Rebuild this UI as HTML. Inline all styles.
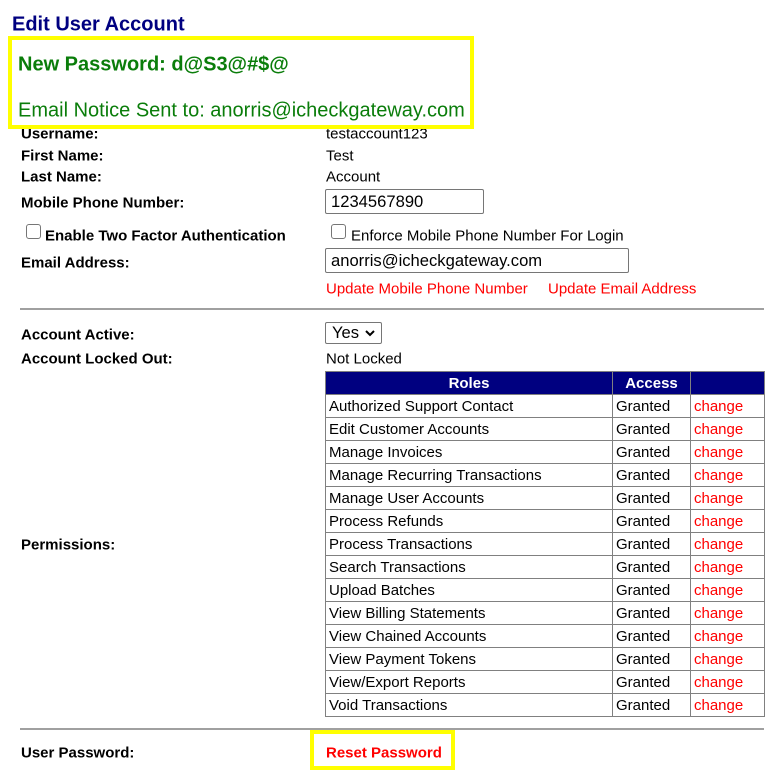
<!DOCTYPE html>
<html><head><meta charset="utf-8"><style>
*{margin:0;padding:0;box-sizing:border-box}
body{width:777px;height:780px;background:#fff;font-family:"Liberation Sans",Arial,sans-serif;font-size:15px;color:#000;position:relative;overflow:hidden}
.a{position:absolute;white-space:nowrap;line-height:20px;transform:translateY(1.5px)}
.b{font-weight:bold}
.r{color:#ff0000}
.inp{position:absolute;border:1px solid #767676;border-radius:2px;background:#fff;font-size:16.6px;line-height:23px;padding-left:5px}
.cb{position:absolute;width:15px;height:15px;border:1px solid #767676;border-radius:3px;background:#fff}
.hr{position:absolute;height:2px;background:#a0a0a0}
table{position:absolute;left:325px;top:371px;border-collapse:collapse;width:440px}
td,th{border:1px solid #808080;height:23px;font-size:15px;padding:2px 3px 0;line-height:20px;white-space:nowrap}
th{background:#000080;color:#fff;font-weight:bold;text-align:center}
td.c{color:#ff0000;padding-left:3px}
</style></head><body>
<div class="a b" style="left:12px;top:11px;font-size:20px;line-height:24px;color:#000080">Edit User Account</div>
<div style="position:absolute;left:8px;top:36px;width:466px;height:93px;border:4px solid #ffff00"></div>
<div class="a b" style="left:18px;top:51px;font-size:20px;line-height:24px;color:#0a7d0a">New Password: d@S3@#$@</div>
<div class="a" style="left:18px;top:97px;font-size:20px;line-height:24px;color:#0a7d0a">Email Notice Sent to: anorris@icheckgateway.com</div>

<div class="a b" style="left:21px;top:123px;z-index:-1">Username:</div>
<div class="a" style="left:326px;top:123px;z-index:-1">testaccount123</div>
<div class="a b" style="left:21px;top:145px">First Name:</div>
<div class="a" style="left:326px;top:145px">Test</div>
<div class="a b" style="left:21px;top:166px">Last Name:</div>
<div class="a" style="left:326px;top:166px">Account</div>
<div class="a b" style="left:21px;top:192px">Mobile Phone Number:</div>
<div class="inp" style="left:325px;top:189px;width:159px;height:25px">1234567890</div>
<div class="cb" style="left:26px;top:224px"></div>
<div class="a b" style="left:45px;top:225px">Enable Two Factor Authentication</div>
<div class="cb" style="left:331px;top:224px"></div>
<div class="a" style="left:351px;top:225px">Enforce Mobile Phone Number For Login</div>
<div class="a b" style="left:21px;top:252px">Email Address:</div>
<div class="inp" style="left:325px;top:248px;width:304px;height:25px">anorris@icheckgateway.com</div>
<div class="a r" style="left:326px;top:278px">Update Mobile Phone Number</div>
<div class="a r" style="left:548px;top:278px">Update Email Address</div>
<div class="hr" style="left:20px;top:308px;width:744px"></div>

<div class="a b" style="left:21px;top:324px">Account Active:</div>
<div class="inp" style="left:325px;top:322px;width:57px;height:22px;font-size:16.6px;line-height:20px;padding-left:6px">Yes<svg style="position:absolute;left:39px;top:7px" width="10" height="7" viewBox="0 0 10 7"><path d="M1 1l4 4 4-4" fill="none" stroke="#000" stroke-width="2"/></svg></div>
<div class="a b" style="left:21px;top:348px">Account Locked Out:</div>
<div class="a" style="left:326px;top:348px">Not Locked</div>
<div class="a b" style="left:21px;top:534px">Permissions:</div>

<table>
<tr><th style="width:287px">Roles</th><th style="width:78px">Access</th><th></th></tr>
<tr><td>Authorized Support Contact</td><td>Granted</td><td class="c">change</td></tr>
<tr><td>Edit Customer Accounts</td><td>Granted</td><td class="c">change</td></tr>
<tr><td>Manage Invoices</td><td>Granted</td><td class="c">change</td></tr>
<tr><td>Manage Recurring Transactions</td><td>Granted</td><td class="c">change</td></tr>
<tr><td>Manage User Accounts</td><td>Granted</td><td class="c">change</td></tr>
<tr><td>Process Refunds</td><td>Granted</td><td class="c">change</td></tr>
<tr><td>Process Transactions</td><td>Granted</td><td class="c">change</td></tr>
<tr><td>Search Transactions</td><td>Granted</td><td class="c">change</td></tr>
<tr><td>Upload Batches</td><td>Granted</td><td class="c">change</td></tr>
<tr><td>View Billing Statements</td><td>Granted</td><td class="c">change</td></tr>
<tr><td>View Chained Accounts</td><td>Granted</td><td class="c">change</td></tr>
<tr><td>View Payment Tokens</td><td>Granted</td><td class="c">change</td></tr>
<tr><td>View/Export Reports</td><td>Granted</td><td class="c">change</td></tr>
<tr><td>Void Transactions</td><td>Granted</td><td class="c">change</td></tr>
</table>

<div class="hr" style="left:20px;top:728px;width:744px"></div>
<div class="a b" style="left:21px;top:742px">User Password:</div>
<div style="position:absolute;left:310px;top:730px;width:145px;height:40px;border:4px solid #ffff00"></div>
<div class="a b r" style="left:326px;top:742px">Reset Password</div>
</body></html>
